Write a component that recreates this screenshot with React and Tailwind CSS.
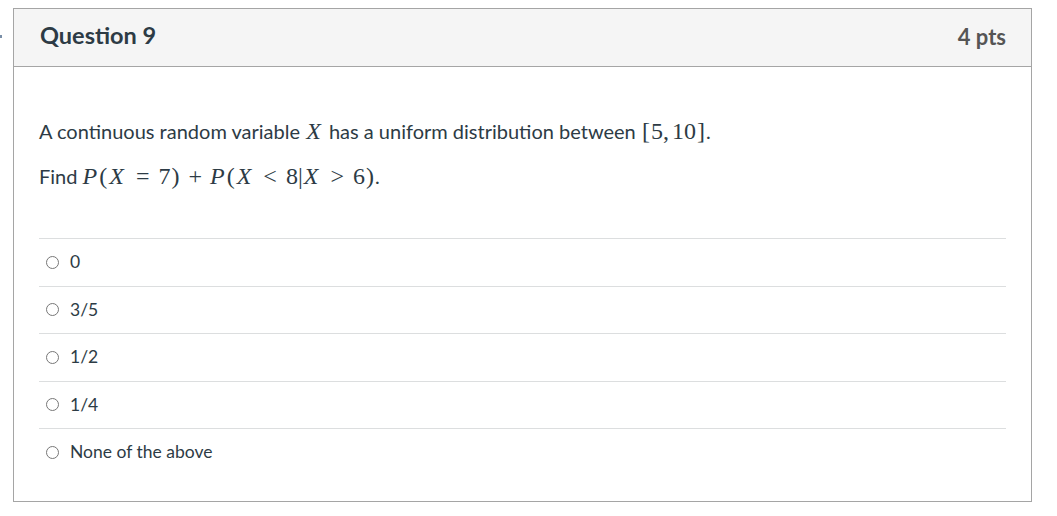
import React from "react";

const M = ({ children }) => (
  <span className="text-[24px] leading-none" style={{ fontFamily: '"Liberation Serif", "DejaVu Serif", serif' }}>{children}</span>
);
const X = () => <span className="ml-[1px] mr-[3px] italic">X</span>;
const P = () => <span className="mr-[1px] italic">P</span>;
const R = ({ children }) => <span className="mx-[9px]">{children}</span>;
const B = ({ children }) => <span className="mx-[8px]">{children}</span>;
const Pa = ({ children }) => <span className="mx-[1px]">{children}</span>;

function Radio({ label }) {
  return (
    <div className="flex h-[47.5px] items-center border-t border-[#dcdedf] pl-[7px]">
      <span className="mr-[11px] inline-block h-[13px] w-[13px] rounded-full border border-[#777]" />
      <span className="text-[17.5px] text-[#2d3b45]">{label}</span>
    </div>
  );
}

export default function App() {
  return (
    <div className="relative min-h-[516px] bg-white pl-[13px] pr-[25px] pt-[8px]" style={{ fontFamily: 'Lato, "Noto Sans", sans-serif' }}>
      <span className="absolute left-0 top-[35px] h-[3px] w-[2px] bg-[#7a8fa8]" />
      <div className="border border-[#a5a5a5]">
        <div className="flex h-[58px] items-center justify-between border-b border-[#a5a5a5] bg-[#f5f5f5] pb-[3px] pl-[26px] pr-[25px]">
          <span className="text-[23.5px] font-bold text-[#2d3b45]">Question 9</span>
          <span className="text-[22px] font-bold text-[#555]">4 pts</span>
        </div>
        <div className="px-[25px] pb-[25px] pt-[52px] text-[#2d3b45]">
          <p className="text-[20px] leading-[24px]">
            A continuous random variable <M><X /></M> has a uniform distribution between <M><Pa>[</Pa>5,<span className="ml-[3px]">10</span><Pa>]</Pa></M>.
          </p>
          <p className="mt-[21px] text-[20px] leading-[24px]">
            Find <M><P /><Pa>(</Pa><X /><R>=</R>7<Pa>)</Pa><B>+</B><P /><Pa>(</Pa><X /><R>&lt;</R>8|<X /><R>&gt;</R>6<Pa>)</Pa></M>.
          </p>
          <div className="mt-[50px]">
            <Radio label="0" />
            <Radio label="3/5" />
            <Radio label="1/2" />
            <Radio label="1/4" />
            <Radio label="None of the above" />
          </div>
        </div>
      </div>
    </div>
  );
}
